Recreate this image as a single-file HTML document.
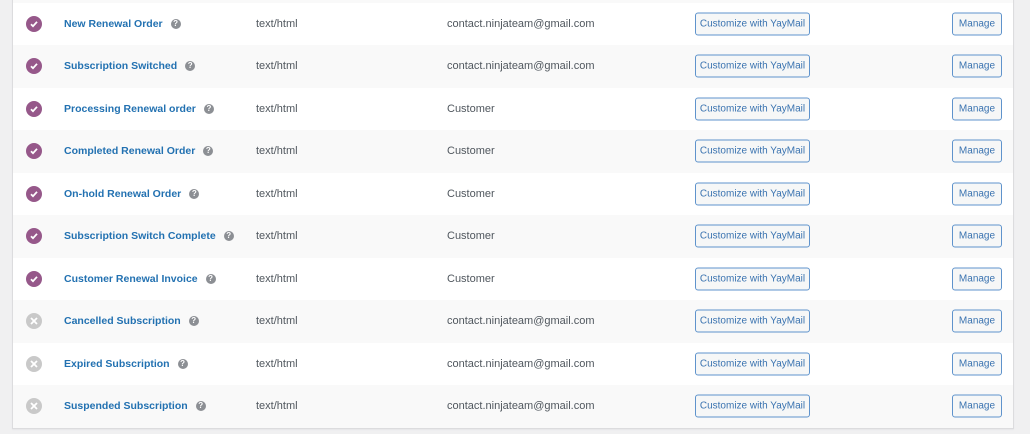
<!DOCTYPE html>
<html><head><meta charset="utf-8"><style>
body{margin:0;background:#f0f0f1;width:1030px;height:434px;overflow:hidden;font-family:"Liberation Sans",sans-serif;font-size:11px;color:#50575e}
.t{position:absolute;left:12px;top:-40px;width:1000px;border:1px solid #dcdcde;border-top:none;background:#fff;box-shadow:0 1px 1px rgba(0,0,0,.04)}
.r{position:relative;height:42.5px}
.r:nth-child(odd){background:#f9f9f9}
.r>*{position:absolute;top:50%;transform:translateY(-50%);white-space:nowrap}
.ic{left:13px;width:16px;height:16px;border-radius:50%;display:flex;align-items:center;justify-content:center}
.ok{background:#96588a}.no{background:#c9c9c9}
.n{left:51px;font-weight:bold;color:#2271b1;font-size:10.5px}
.q{display:inline-block;width:10px;height:10px;border-radius:50%;background:#8c8f94;color:#fff;font-size:8px;line-height:10px;text-align:center;margin-left:8px;vertical-align:middle}
.ty{left:243px}.em{left:434px}
.b{border:1px solid #5f93cc;border-radius:3px;background:#f6f7f7;color:#3a73b0;height:21px;line-height:22px;font-size:10px;text-align:center}
.c{left:682px;width:113px}.m{left:939px;width:48px}
</style></head><body><div class="t">
<div class="r"></div>
<div class="r"><span class="ic ok"><svg width="10" height="10" viewBox="0 0 10 10"><path d="M2 5.2l2 2 4-4.4" stroke="#fff" stroke-width="1.8" fill="none"/></svg></span><span class="n">New Renewal Order<span class="q">?</span></span><span class="ty">text/html</span><span class="em">contact.ninjateam@gmail.com</span><span class="b c">Customize with YayMail</span><span class="b m">Manage</span></div>
<div class="r"><span class="ic ok"><svg width="10" height="10" viewBox="0 0 10 10"><path d="M2 5.2l2 2 4-4.4" stroke="#fff" stroke-width="1.8" fill="none"/></svg></span><span class="n">Subscription Switched<span class="q">?</span></span><span class="ty">text/html</span><span class="em">contact.ninjateam@gmail.com</span><span class="b c">Customize with YayMail</span><span class="b m">Manage</span></div>
<div class="r"><span class="ic ok"><svg width="10" height="10" viewBox="0 0 10 10"><path d="M2 5.2l2 2 4-4.4" stroke="#fff" stroke-width="1.8" fill="none"/></svg></span><span class="n">Processing Renewal order<span class="q">?</span></span><span class="ty">text/html</span><span class="em">Customer</span><span class="b c">Customize with YayMail</span><span class="b m">Manage</span></div>
<div class="r"><span class="ic ok"><svg width="10" height="10" viewBox="0 0 10 10"><path d="M2 5.2l2 2 4-4.4" stroke="#fff" stroke-width="1.8" fill="none"/></svg></span><span class="n">Completed Renewal Order<span class="q">?</span></span><span class="ty">text/html</span><span class="em">Customer</span><span class="b c">Customize with YayMail</span><span class="b m">Manage</span></div>
<div class="r"><span class="ic ok"><svg width="10" height="10" viewBox="0 0 10 10"><path d="M2 5.2l2 2 4-4.4" stroke="#fff" stroke-width="1.8" fill="none"/></svg></span><span class="n">On-hold Renewal Order<span class="q">?</span></span><span class="ty">text/html</span><span class="em">Customer</span><span class="b c">Customize with YayMail</span><span class="b m">Manage</span></div>
<div class="r"><span class="ic ok"><svg width="10" height="10" viewBox="0 0 10 10"><path d="M2 5.2l2 2 4-4.4" stroke="#fff" stroke-width="1.8" fill="none"/></svg></span><span class="n">Subscription Switch Complete<span class="q">?</span></span><span class="ty">text/html</span><span class="em">Customer</span><span class="b c">Customize with YayMail</span><span class="b m">Manage</span></div>
<div class="r"><span class="ic ok"><svg width="10" height="10" viewBox="0 0 10 10"><path d="M2 5.2l2 2 4-4.4" stroke="#fff" stroke-width="1.8" fill="none"/></svg></span><span class="n">Customer Renewal Invoice<span class="q">?</span></span><span class="ty">text/html</span><span class="em">Customer</span><span class="b c">Customize with YayMail</span><span class="b m">Manage</span></div>
<div class="r"><span class="ic no"><svg width="8" height="8" viewBox="0 0 8 8"><path d="M1 1l6 6M7 1l-6 6" stroke="#fff" stroke-width="1.8"/></svg></span><span class="n">Cancelled Subscription<span class="q">?</span></span><span class="ty">text/html</span><span class="em">contact.ninjateam@gmail.com</span><span class="b c">Customize with YayMail</span><span class="b m">Manage</span></div>
<div class="r"><span class="ic no"><svg width="8" height="8" viewBox="0 0 8 8"><path d="M1 1l6 6M7 1l-6 6" stroke="#fff" stroke-width="1.8"/></svg></span><span class="n">Expired Subscription<span class="q">?</span></span><span class="ty">text/html</span><span class="em">contact.ninjateam@gmail.com</span><span class="b c">Customize with YayMail</span><span class="b m">Manage</span></div>
<div class="r"><span class="ic no"><svg width="8" height="8" viewBox="0 0 8 8"><path d="M1 1l6 6M7 1l-6 6" stroke="#fff" stroke-width="1.8"/></svg></span><span class="n">Suspended Subscription<span class="q">?</span></span><span class="ty">text/html</span><span class="em">contact.ninjateam@gmail.com</span><span class="b c">Customize with YayMail</span><span class="b m">Manage</span></div>
</div></body></html>
